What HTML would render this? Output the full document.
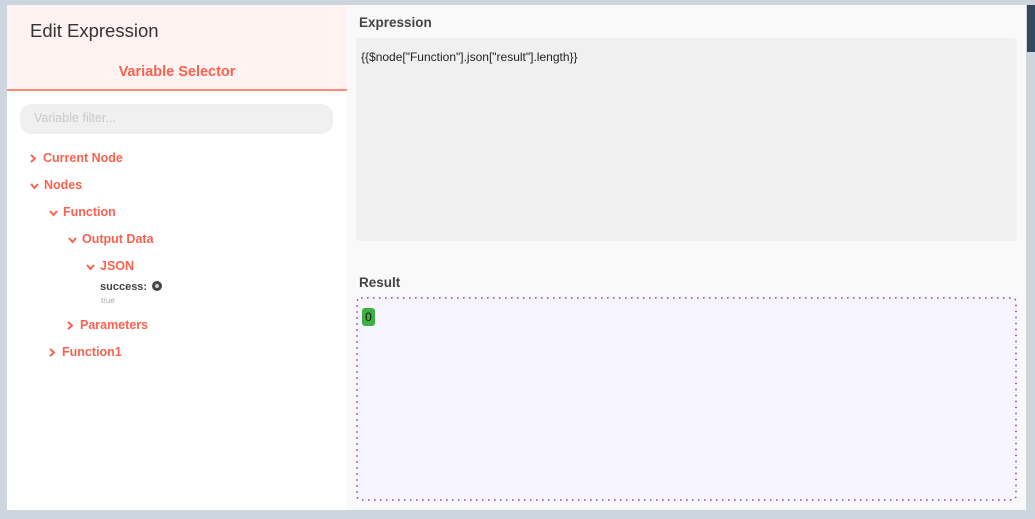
<!DOCTYPE html>
<html><head><style>
*{margin:0;padding:0;box-sizing:border-box}
body{width:1035px;height:519px;background:#cdd5de;position:relative;overflow:hidden;font-family:"Liberation Sans","DejaVu Sans",sans-serif}
.dlg{position:absolute;left:7px;top:5px;width:1019px;height:505px;background:#f9f9f9}
.left{position:absolute;left:0;top:0;width:340px;height:505px;background:#fff}
.head{position:absolute;left:0;top:0;width:340px;height:86px;background:#fff3f1;border-bottom:2px solid #ff8a78}
.title{position:absolute;left:23px;top:15px;font-size:18.5px;color:#333}
.vs{position:absolute;left:0;width:340px;top:59px;text-align:center;font-size:14.5px;color:#f8624f;font-weight:600}
.filter{position:absolute;left:13px;top:99px;width:313px;height:30px;border-radius:12px;background:#f0f0f0;border:1px solid #eee;color:#c8c8c8;font-size:12.5px;padding:6px 13px}
.it{position:absolute;font-size:12.5px;color:#f8624f;font-weight:600;white-space:nowrap}
.it svg{position:absolute;left:-14px;top:3px}
.k{position:absolute;left:93px;top:276px;font-size:11px;color:#444;font-weight:600}
.dot{display:inline-block;width:10px;height:10px;border-radius:50%;background:#444;vertical-align:-1px;margin-left:2px;position:relative}
.dot:after{content:"";position:absolute;left:3px;top:3px;width:4px;height:4px;border-radius:50%;background:#ccc}
.v{position:absolute;left:94px;top:291px;font-size:8px;color:#aaa}
.lbl{position:absolute;left:352px;font-size:13.5px;color:#444;font-weight:bold}
.expr{position:absolute;left:349px;top:33px;width:661px;height:203px;background:#f0f0f0;border-radius:4px;font-size:12px;color:#222;padding:12px 5px}
.res{position:absolute;left:349px;top:292px;width:661px;height:204px;background:#f6f4ff;border-radius:4px}
.res svg{position:absolute;left:0;top:0}
.badge{position:absolute;left:6px;top:11px;width:13px;height:18px;background:#3cb043;border-radius:3px;font-size:12px;color:#111;text-align:center;line-height:18px}
.thumb{position:absolute;left:1027px;top:5px;width:8px;height:47px;background:#34495e}
</style></head><body>
<div class="dlg">
<div class="left">
<div class="head"><div class="title">Edit Expression</div><div class="vs">Variable Selector</div></div>
<div class="filter">Variable filter...</div>
<div class="it" style="left:36px;top:146px"><svg width="8" height="9" viewBox="0 0 8 9"><path d="M2 1l4 3.5L2 8" stroke="#f8624f" stroke-width="2" fill="none"/></svg>Current Node</div>
<div class="it" style="left:37px;top:173px"><svg width="9" height="8" viewBox="0 0 9 8" style="top:4px"><path d="M1 2l3.5 4L8 2" stroke="#f8624f" stroke-width="2" fill="none"/></svg>Nodes</div>
<div class="it" style="left:56px;top:200px"><svg width="9" height="8" viewBox="0 0 9 8" style="top:4px"><path d="M1 2l3.5 4L8 2" stroke="#f8624f" stroke-width="2" fill="none"/></svg>Function</div>
<div class="it" style="left:75px;top:227px"><svg width="9" height="8" viewBox="0 0 9 8" style="top:4px"><path d="M1 2l3.5 4L8 2" stroke="#f8624f" stroke-width="2" fill="none"/></svg>Output Data</div>
<div class="it" style="left:93px;top:254px"><svg width="9" height="8" viewBox="0 0 9 8" style="top:4px"><path d="M1 2l3.5 4L8 2" stroke="#f8624f" stroke-width="2" fill="none"/></svg>JSON</div>
<div class="k">success: <span class="dot"></span></div>
<div class="v">true</div>
<div class="it" style="left:73px;top:313px"><svg width="8" height="9" viewBox="0 0 8 9"><path d="M2 1l4 3.5L2 8" stroke="#f8624f" stroke-width="2" fill="none"/></svg>Parameters</div>
<div class="it" style="left:55px;top:340px"><svg width="8" height="9" viewBox="0 0 8 9"><path d="M2 1l4 3.5L2 8" stroke="#f8624f" stroke-width="2" fill="none"/></svg>Function1</div>
</div>
<div class="lbl" style="top:10px">Expression</div>
<div class="expr">{{$node["Function"].json["result"].length}}</div>
<div class="lbl" style="top:270px">Result</div>
<div class="res"><svg width="661" height="204"><rect x="1" y="1" width="659" height="202" rx="4" fill="none" stroke="#a03e80" stroke-width="1.5" stroke-dasharray="1.5 4.5"/></svg><div class="badge">0</div></div>
</div>
<div class="thumb"></div>
</body></html>
